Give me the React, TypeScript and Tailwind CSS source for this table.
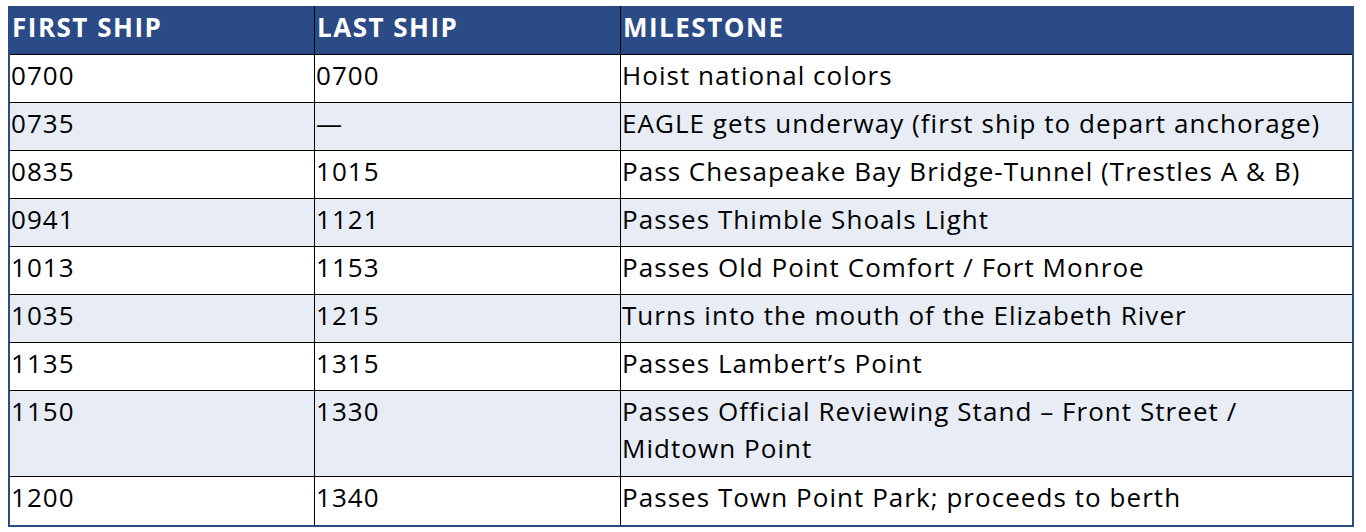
import React from "react";

const rows: [string, string, string][] = [
  ["0700", "0700", "Hoist national colors"],
  ["0735", "—", "EAGLE gets underway (first ship to depart anchorage)"],
  ["0835", "1015", "Pass Chesapeake Bay Bridge-Tunnel (Trestles A & B)"],
  ["0941", "1121", "Passes Thimble Shoals Light"],
  ["1013", "1153", "Passes Old Point Comfort / Fort Monroe"],
  ["1035", "1215", "Turns into the mouth of the Elizabeth River"],
  ["1135", "1315", "Passes Lambert’s Point"],
  ["1150", "1330", "Passes Official Reviewing Stand – Front Street / Midtown Point"],
  ["1200", "1340", "Passes Town Point Park; proceeds to berth"],
];

export default function App() {
  return (
    <div className="w-[1366px] h-[532px] bg-white pt-[6px] pl-[8px]" style={{ fontFamily: '"Open Sans", "Noto Sans", sans-serif' }}>
      <div className="w-[1346px] border-l-2 border-r-2 border-b-2 border-[#2B4B86] box-border">
        <div className="grid grid-cols-[305px_306px_1fr]">
          {["FIRST SHIP", "LAST SHIP", "MILESTONE"].map((h, i) => (
            <div
              key={h}
              className={`h-[49px] bg-[#2B4B86] text-white font-bold text-[26px] tracking-[1.5px] leading-[36px] pl-[2px] pt-[3px] border-b border-black ${i < 2 ? "border-r" : ""}`}
            >
              {h}
            </div>
          ))}
          {rows.map((r, ri) => (
            <React.Fragment key={ri}>
              {r.map((c, ci) => (
                <div
                  key={ci}
                  className={`${ri === 7 ? "h-[86px]" : "h-[48px]"} ${ri % 2 === 1 ? "bg-[#E8ECF5]" : "bg-white"} text-black text-[26px] tracking-[1.05px] leading-[37px] pl-[1px] pt-[2px] ${ri < rows.length - 1 ? "border-b" : ""} border-black ${ci < 2 ? "border-r" : ""}`}
                >
                  {c}
                </div>
              ))}
            </React.Fragment>
          ))}
        </div>
      </div>
    </div>
  );
}
